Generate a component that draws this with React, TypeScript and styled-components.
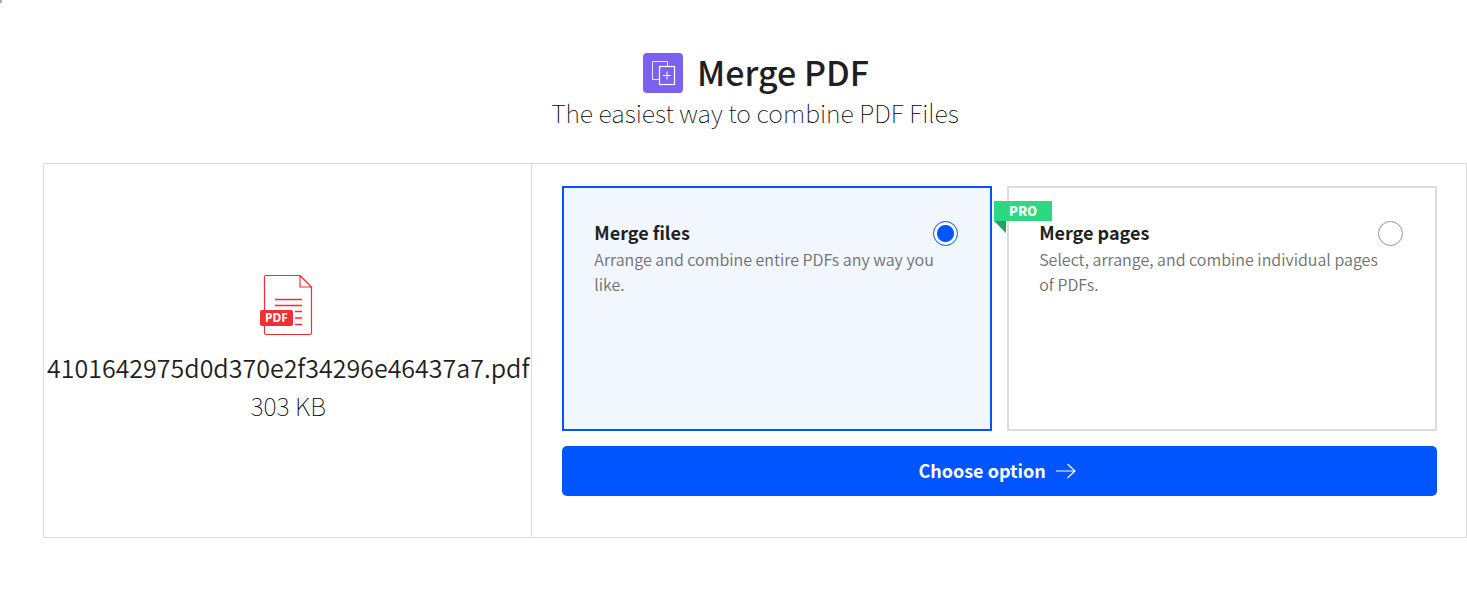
import React, { useState } from "react";
import styled, { createGlobalStyle } from "styled-components";

const GlobalStyle = createGlobalStyle`
  *, *::before, *::after { box-sizing: border-box; }
  body {
    margin: 0;
    background: #fff;
    color: #1f1f1f;
    font-family: "Source Sans Pro", "Noto Sans CJK SC", "Noto Sans", sans-serif;
  }
  h1, h2, p { margin: 0; }
`;

const Page = styled.main`
  padding: 50px 0 53px 43px;
`;

const CornerMark = styled.span`
  position: absolute;
  top: 0;
  left: 0;
  width: 2px;
  height: 3px;
  background: linear-gradient(90deg, #b09a9a 50%, #a9bdd6 50%);
`;

const Header = styled.header`
  display: flex;
  flex-direction: column;
  align-items: center;
  padding-bottom: 35px;
`;

const TitleRow = styled.div`
  display: flex;
  align-items: center;
  gap: 14px;
  height: 46px;
  padding-left: 2px;
`;

const Title = styled.h1`
  padding-bottom: 2px;
  font-size: 34px;
  line-height: 42px;
  font-weight: 500;
`;

const Subtitle = styled.p`
  font-size: 25px;
  line-height: 32px;
  font-weight: 100;
  color: #000;
`;

const Panel = styled.section`
  display: flex;
  min-height: 375px;
  border: 1px solid #dcdcdc;
`;

const FilePane = styled.div`
  display: flex;
  flex: none;
  flex-direction: column;
  align-items: center;
  justify-content: center;
  padding: 0 2px 3px 3px;
  border-right: 1px solid #dcdcdc;
`;

const FileName = styled.p`
  margin-top: 12px;
  font-size: 25px;
  line-height: 38px;
  font-weight: 350;
`;

const FileSize = styled.p`
  font-size: 25px;
  line-height: 38px;
  font-weight: 100;
  color: #000;
`;

const OptionForm = styled.form`
  display: flex;
  flex: 1;
  flex-direction: column;
  gap: 15px;
  min-width: 0;
  padding: 22px 29px 41px 30px;
`;

const Options = styled.div`
  display: grid;
  grid-template-columns: 1fr 1fr;
  gap: 15px;
`;

const OptionCard = styled.label<{ $selected: boolean }>`
  position: relative;
  display: flex;
  align-items: flex-start;
  height: 245px;
  padding: 32px 32px 30px 30px;
  border: 2px solid ${(p) => (p.$selected ? "#0055ff" : "#dcdcdc")};
  background: ${(p) => (p.$selected ? "#f1f6ff" : "#fff")};
  cursor: pointer;
`;

const OptionText = styled.span`
  flex: 1;
  min-width: 0;
`;

const OptionTitle = styled.span`
  display: block;
  margin-bottom: 2px;
  font-size: 18px;
  line-height: 25px;
  font-weight: 700;
`;

const OptionDescription = styled.span`
  display: block;
  max-width: 350px;
  font-size: 16px;
  line-height: 25px;
  font-weight: 350;
  color: #707070;
`;

const Radio = styled.input`
  appearance: none;
  flex: none;
  width: 25px;
  height: 25px;
  margin: 1px 0 0 -25px;
  border: 1px solid #949494;
  border-radius: 50%;
  background: #fff;
  cursor: pointer;

  &:checked {
    border-color: #0055ff;
    background: radial-gradient(circle, #0055ff 8px, #fff 9px);
  }
`;

const ProBadge = styled.span`
  position: absolute;
  top: 13px;
  left: -15px;
  width: 58px;
  height: 20px;
  background: #2cd982;
  color: #fff;
  font-size: 13px;
  line-height: 20px;
  font-weight: 900;
  text-align: center;

  &::after {
    content: "";
    position: absolute;
    top: 20px;
    left: 0;
    border-top: 12px solid #21a463;
    border-left: 12px solid transparent;
  }
`;

const SubmitButton = styled.button`
  display: flex;
  align-items: center;
  justify-content: center;
  gap: 9px;
  height: 50px;
  padding: 0 4px 0 0;
  border: 0;
  border-radius: 5px;
  background: #0055ff;
  color: #fff;
  font-family: inherit;
  font-size: 18px;
  font-weight: 700;
  cursor: pointer;
`;

const SubmitLabel = styled.span`
  padding-bottom: 2px;
`;

const PdfLabel = styled.text`
  font-family: "Noto Sans", sans-serif;
  font-size: 12px;
  font-weight: 700;
`;

const MergeIcon = () => (
  <svg width="40" height="40" viewBox="0 0 40 40" fill="none" aria-hidden="true">
    <rect width="40" height="40" rx="4" fill="#7b61f0" />
    <path d="M16 26.5H9.5V8.5h15V14" stroke="#fff" strokeOpacity=".85" />
    <rect x="16.5" y="13.5" width="15" height="18" stroke="#fff" strokeWidth="1.2" />
    <path d="M20 22.5h8M24 18.5v8" stroke="#fff" />
  </svg>
);

const PdfIcon = () => (
  <svg width="58" height="62" viewBox="0 0 58 62" fill="none" aria-hidden="true">
    <path
      d="M41 1.5H7Q5.500 1.500 5.500 3V59Q5.500 60.500 7 60.500H51Q52.500 60.500 52.500 59V13L41 1.500V13H52.500"
      stroke="#ee2f33"
      strokeWidth="1.2"
      strokeLinejoin="round"
    />
    <path d="M16 25.500H43M16 31.500H43M36 37.500H43M36 44H43M36 50.500H43" stroke="#ee2f33" strokeWidth="1.3" />
    <rect x="1" y="36" width="33" height="16" rx="2" fill="#ee2f33" />
    <PdfLabel x="17.500" y="48" textAnchor="middle" fill="#fff">PDF</PdfLabel>
  </svg>
);

const ArrowIcon = () => (
  <svg width="22" height="16" viewBox="0 0 22 16" fill="none" aria-hidden="true">
    <path d="M1 8h19M12.500 1l7.500 7-7.500 7" stroke="#fff" strokeWidth="1.2" />
  </svg>
);

const options = [
  { id: "files", title: "Merge files", text: "Arrange and combine entire PDFs any way you like.", pro: false },
  { id: "pages", title: "Merge pages", text: "Select, arrange, and combine individual pages of PDFs.", pro: true },
];

export default function App() {
  const [selected, setSelected] = useState("files");

  return (
    <>
      <GlobalStyle />
      <CornerMark />
      <Page>
        <Header>
          <TitleRow>
            <MergeIcon />
            <Title>Merge PDF</Title>
          </TitleRow>
          <Subtitle>The easiest way to combine PDF Files</Subtitle>
        </Header>
        <Panel>
          <FilePane>
            <PdfIcon />
            <FileName>4101642975d0d370e2f34296e46437a7.pdf</FileName>
            <FileSize>303 KB</FileSize>
          </FilePane>
          <OptionForm onSubmit={(e) => e.preventDefault()}>
            <Options>
              {options.map((o) => (
                <OptionCard key={o.id} $selected={selected === o.id}>
                  {o.pro && <ProBadge>PRO</ProBadge>}
                  <OptionText>
                    <OptionTitle>{o.title}</OptionTitle>
                    <OptionDescription>{o.text}</OptionDescription>
                  </OptionText>
                  <Radio
                    type="radio"
                    name="merge-mode"
                    value={o.id}
                    checked={selected === o.id}
                    onChange={() => setSelected(o.id)}
                  />
                </OptionCard>
              ))}
            </Options>
            <SubmitButton type="submit">
              <SubmitLabel>Choose option</SubmitLabel>
              <ArrowIcon />
            </SubmitButton>
          </OptionForm>
        </Panel>
      </Page>
    </>
  );
}
